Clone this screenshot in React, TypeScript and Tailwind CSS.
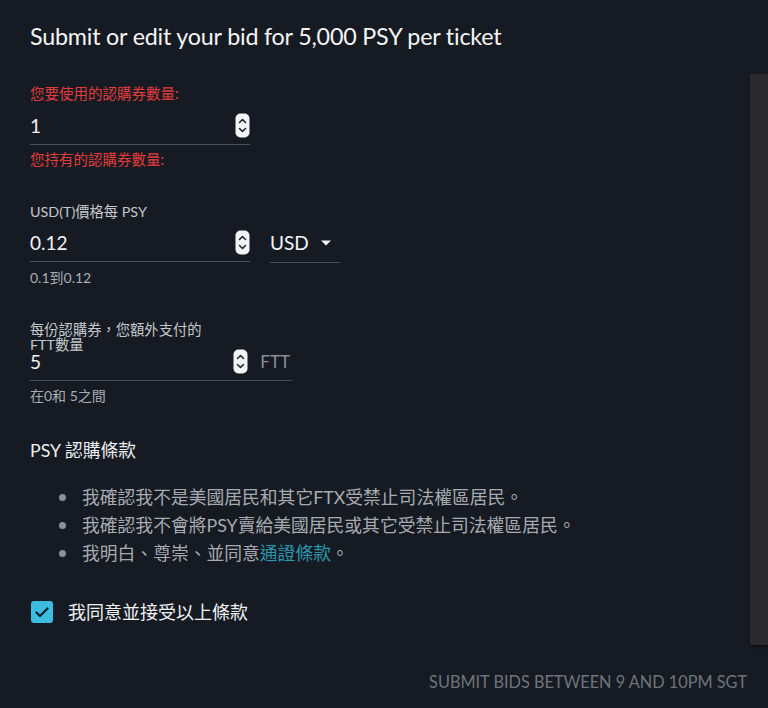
import React from "react";

const font = { fontFamily: 'Lato, "Noto Sans CJK TC", sans-serif' };

function Spinner() {
    return (
        <svg width="15" height="25" viewBox="0 0 15 25" className="shrink-0">
            <rect x="0.5" y="0.5" width="14" height="24" rx="5" fill="#f3f4f6" />
            <path d="M4.5 9.5 L7.5 6.5 L10.5 9.5" stroke="#1f2937" strokeWidth="1.6" fill="none" strokeLinecap="round" strokeLinejoin="round" />
            <path d="M4.5 15.5 L7.5 18.5 L10.5 15.5" stroke="#1f2937" strokeWidth="1.6" fill="none" strokeLinecap="round" strokeLinejoin="round" />
        </svg>
    );
}

function NumberField({ value, suffix }: { value: string; suffix?: string }) {
    return (
        <div className={`flex items-center border-b border-[#4b5058] pb-[6px] h-[25px] box-content ${suffix ? "w-[262px]" : "w-[220px]"}`}>
            <span className="flex-1 text-[19px] text-[#f3f4f6] leading-[18px]">{value}</span>
            <Spinner />
            {suffix && <span className="ml-[12px] mr-[2px] text-[17px] text-[#8b8f96] leading-[18px]">{suffix}</span>}
        </div>
    );
}

function Bullet({ children }: { children: React.ReactNode }) {
    return (
        <li className="flex items-center">
            <span className="w-[7px] h-[7px] rounded-full bg-[#8d9197] ml-[29px] mr-[16px] shrink-0" />
            <span>{children}</span>
        </li>
    );
}

export default function App() {
    return (
        <div className="h-[708px] w-[768px] bg-[#161b23] flex flex-col overflow-hidden" style={font}>
            <h1 className="pl-[30px] pt-[21px] text-[23.3px] text-[#f5f5f5] leading-[30px] tracking-[-0.2px]">
                Submit or edit your bid for 5,000 PSY per ticket
            </h1>

            <div className="flex mt-[23px] h-[571px]">
                <div className="flex-1 pl-[30px] pt-[11px]">
                    <p className="text-[14.5px] text-[#e03c3c] leading-[18px]">您要使用的認購券數量:</p>
                    <div className="mt-[10px]">
                        <NumberField value="1" />
                    </div>
                    <p className="mt-[6px] text-[14.5px] text-[#e03c3c] leading-[18px]">您持有的認購券數量:</p>

                    <p className="mt-[34px] text-[14.3px] text-[#c4c7cc] leading-[18px]">USD(T)價格每 PSY</p>
                    <div className="mt-[9px] flex gap-[20px]">
                        <div className="pb-[1px]">
                            <NumberField value="0.12" />
                        </div>
                        <div className="w-[70px] h-[25px] box-content flex items-center border-b border-[#4b5058] pb-[7px]">
                            <span className="flex-1 text-[19px] text-[#f3f4f6] leading-[18px]">USD</span>
                            <svg width="12" height="8" viewBox="0 0 12 8" className="mr-[8px]">
                                <path d="M1 1.5 L6 6.5 L11 1.5 Z" fill="#f3f4f6" />
                            </svg>
                        </div>
                    </div>
                    <p className="mt-[6px] text-[14px] text-[#a9adb3] leading-[18px]">0.1到0.12</p>

                    <p className="mt-[35px] text-[14.3px] text-[#c4c7cc] leading-[15px] w-[185px]">每份認購券，您額外支付的FTT數量</p>
                    <div className="mt-[-3px]">
                        <NumberField value="5" suffix="FTT" />
                    </div>
                    <p className="mt-[6px] text-[14px] text-[#a9adb3] leading-[18px]">在0和 5之間</p>

                    <h2 className="mt-[33px] text-[17.8px] text-[#eceef0] leading-[24px]">PSY 認購條款</h2>

                    <ul className="mt-[21px] text-[17.8px] text-[#a7abb1] leading-[28px]">
                        <Bullet>我確認我不是美國居民和其它FTX受禁止司法權區居民。</Bullet>
                        <Bullet>我確認我不會將PSY賣給美國居民或其它受禁止司法權區居民。</Bullet>
                        <Bullet>
                            我明白、尊崇、並同意<span className="text-[#2b97ad]">通證條款</span>。
                        </Bullet>
                    </ul>

                    <label className="mt-[33px] flex items-center gap-[15px] pl-[1px]">
                        <span className="w-[22px] h-[22px] rounded-[3px] bg-[#3cbde0] flex items-center justify-center">
                            <svg width="14" height="11" viewBox="0 0 14 11">
                                <path d="M1.5 5.5 L5 9 L12.5 1.5" stroke="#12202a" strokeWidth="2.2" fill="none" strokeLinecap="round" strokeLinejoin="round" />
                            </svg>
                        </span>
                        <span className="text-[18px] text-[#f0f1f3] leading-[24px]">我同意並接受以上條款</span>
                    </label>
                </div>
                <div className="w-[18px] bg-[#2a2a2d] shadow-[0_2px_3px_rgba(0,0,0,0.5)]" />
            </div>

            <p className="mt-[26px] pr-[21px] text-right text-[16.3px] text-[#6f747b] leading-[22px]">
                SUBMIT BIDS BETWEEN 9 AND 10PM SGT
            </p>
        </div>
    );
}
